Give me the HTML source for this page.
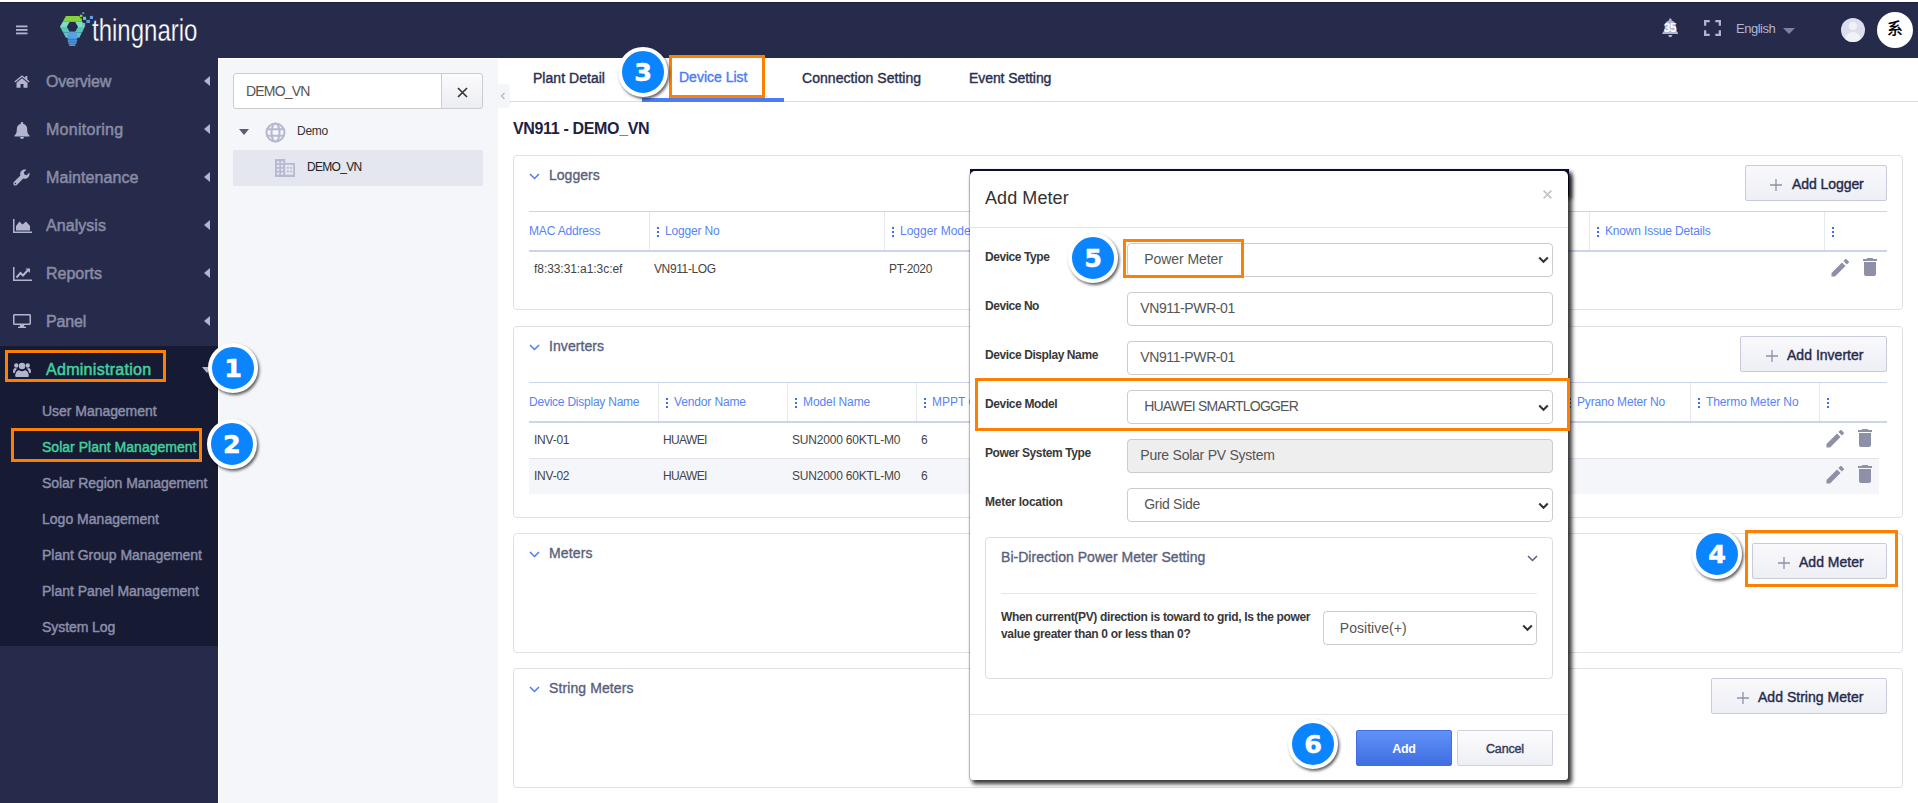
<!DOCTYPE html>
<html lang="en">
<head>
<meta charset="utf-8">
<title>Thingnario - Solar Plant Management</title>
<style>
*{box-sizing:border-box;margin:0;padding:0}
html,body{width:1918px;height:803px;overflow:hidden;background:#fff}
body{font-family:"Liberation Sans","Noto Sans CJK TC",sans-serif;font-size:14px;color:#262b4b;position:relative}
.abs,.abs-all *{position:absolute}
.t{position:absolute;white-space:nowrap;line-height:20px;height:20px}
/* ---------- header ---------- */
#topline{position:absolute;left:0;top:0;width:1918px;height:2px;background:#fff}
#header{position:absolute;left:0;top:2px;width:1918px;height:56px;background:#262b4b;border-top:1px solid #1b1f40}
#sidebar{position:absolute;left:0;top:58px;width:218px;height:745px;background:#262b4b}
#adminbg{position:absolute;left:0;top:288px;width:218px;height:300px;background:#161a33}
.mi{-webkit-text-stroke:.5px currentColor;position:absolute;left:46px;font-size:16px;font-weight:normal;color:#898ca6;line-height:20px;height:20px;white-space:nowrap}
.mi.on{color:#42d29d}
.si{-webkit-text-stroke:.45px currentColor;position:absolute;left:42px;font-size:14px;font-weight:normal;color:#8b8fa9;line-height:20px;height:20px;white-space:nowrap}
.si.on{color:#42d29d}
.arr{position:absolute;left:204px;width:0;height:0;border-top:5px solid transparent;border-bottom:5px solid transparent;border-right:6px solid #b3b5cf}
.ico{position:absolute}
#brand{position:absolute;left:92px;top:9px;font-size:30.500px;line-height:36px;color:#fff;white-space:nowrap;transform-origin:0 0;transform:scaleX(.787);letter-spacing:0;-webkit-text-stroke:.3px #262b4b}
/* ---------- tree ---------- */
#tree{position:absolute;left:218px;top:58px;width:280px;height:745px;background:#f5f6fa;border-left:1px solid #fff;border-top:1px solid #fff}
/* ---------- main ---------- */
#main{position:absolute;left:498px;top:58px;width:1420px;height:745px;background:#fff}
.panel{position:absolute;left:513px;width:1390px;border:1px solid #dfe0e6;border-radius:4px;background:#fff}
.ph{-webkit-text-stroke:.35px currentColor;position:absolute;font-size:14px;font-weight:normal;color:#5a5f7d;line-height:20px;white-space:nowrap}
.btn{position:absolute;height:38px;border:1px solid #c9cbd8;border-radius:2px;background:linear-gradient(#f9f9fc,#eeeff5);font-size:14.5px;font-weight:bold;color:#262b4b;line-height:36px;white-space:nowrap}
.th{position:absolute;font-size:12px;color:#5784f4;line-height:16px;white-space:nowrap}
.td{position:absolute;font-size:12px;color:#444;line-height:16px;white-space:nowrap}
.hl{position:absolute;height:1px;background:#ccd4ec}
.vl{position:absolute;width:1px;background:#e6e8f0}
.dots{position:absolute;width:2.600px;height:2.600px;margin:-.3px 0 0 -.3px;background:#3d6ff0;box-shadow:0 4px 0 #3d6ff0,0 8px 0 #3d6ff0}
.tab{-webkit-text-stroke:.4px currentColor;font-size:14px;font-weight:normal;color:#2b3050}
.bt{-webkit-text-stroke:.4px currentColor;font-size:14px;font-weight:normal;color:#262b4b}
/* ---------- modal ---------- */
#modal{position:absolute;left:970px;top:170px;width:598px;height:610px}
#mbg{position:absolute;left:0;top:1px;width:597.800px;height:608.700px;background:#fff;border-radius:5px 5px 3px 3px;box-shadow:3px 3px 4px .5px rgba(0,0,0,.78),-1px 0 1px rgba(0,0,0,.22)}
.lbl{position:absolute;left:15px;font-size:12px;font-weight:bold;color:#383838;line-height:16px;white-space:nowrap}
.inp{position:absolute;left:157px;width:426px;height:34px;border:1px solid #ccc;border-radius:4px;background:#fff;font-size:14px;color:#555;line-height:32px;padding-left:13px;white-space:nowrap}
.sel{padding-left:17px}
.chev{position:absolute;right:4px;top:12px;width:10px;height:8px}
.iv{font-size:14px;color:#555}
#mshadow{position:absolute;left:970px;top:169px;width:598.750px;height:27px;background:#0b1035;box-shadow:3px 3px 4px rgba(0,0,0,.6)}
/* ---------- annotations ---------- */
.badge{position:absolute;width:50px;height:50px;border-radius:50%;background:#0a84ff;border:4.750px solid #fff;box-shadow:1.500px 2px 3px rgba(0,0,0,.62);color:#fff;font-family:"DejaVu Sans","Liberation Sans",sans-serif;font-weight:bold;font-size:25.500px;line-height:42.500px;text-align:center;-webkit-text-stroke:.5px #fff}
.obox{position:absolute;border:3px solid #ff8000}
</style>
</head>
<body>
<div id="main"></div>
<div id="content">
<div style="position:absolute;left:498px;top:84px;width:12px;height:23.500px;background:#f5f6fa;border-radius:0 3px 3px 0"></div>
<svg class="ico" style="left:500px;top:92px" width="6" height="8" viewBox="0 0 6 8"><path d="M4.500 1L1.500 4l3 3" fill="none" stroke="#b0b3c8" stroke-width="1.200"/></svg>
<div class="hl" style="left:509px;top:101px;width:1409px;background:#dcdde3"></div>
<div style="position:absolute;left:642px;top:98px;width:142px;height:3.500px;background:#4b7cf3"></div>
<div class="t tab" style="left:533px;top:68px;letter-spacing:0.034px" id="tab1">Plant Detail</div>
<div class="t tab" style="left:679px;top:67px;color:#4b7cf3;letter-spacing:-0.006px" id="tab2">Device List</div>
<div class="t tab" style="left:802px;top:68px;letter-spacing:0.049px" id="tab3">Connection Setting</div>
<div class="t tab" style="left:969px;top:68px;letter-spacing:-0.075px" id="tab4">Event Setting</div>
<div class="t" style="left:513px;top:118.600px;font-size:16px;font-weight:bold;color:#1d2245;letter-spacing:-0.339px" id="title">VN911 - DEMO_VN</div>
<div class="panel" style="top:155px;height:155px"></div>
<svg class="ico" style="left:529px;top:172.5px" width="11" height="7" viewBox="0 0 11 7"><path d="M1 1l4.500 4.500L10 1" fill="none" stroke="#4b7cf3" stroke-width="1.500"/></svg>
<div class="ph" style="left:549px;top:165px;letter-spacing:0.015px" id="ph1">Loggers</div>
<div class="btn" style="left:1745px;top:165px;width:142px;height:36px"></div><svg class="ico" style="left:1770px;top:178.5px" width="12" height="12" viewBox="0 0 12 12"><path d="M6 0v12M0 6h12" stroke="#8f92a6" stroke-width="1.300"/></svg><div class="t bt" style="left:1792px;top:174.0px;letter-spacing:-0.071px" id="b1">Add Logger</div>
<div class="hl" style="left:529px;top:211px;width:1358px"></div><div class="hl" style="left:529px;top:250px;width:1358px;height:2px"></div>
<i class="vl" style="left:649px;top:212px;height:38px"></i><i class="vl" style="left:884px;top:212px;height:38px"></i><i class="vl" style="left:1589px;top:212px;height:38px"></i><i class="vl" style="left:1824px;top:212px;height:38px"></i>
<div class="th" style="left:529px;top:223px;letter-spacing:-0.178px" id="h1">MAC Address</div><i class="dots" style="left:657px;top:227px"></i><div class="th" style="left:665px;top:223px;letter-spacing:-0.161px" id="h2">Logger No</div><i class="dots" style="left:892px;top:227px"></i><div class="th" style="left:900px;top:223px" id="h3">Logger Model</div><i class="dots" style="left:1597px;top:227px"></i><div class="th" style="left:1605px;top:223px;letter-spacing:-0.170px" id="h4">Known Issue Details</div><i class="dots" style="left:1832px;top:227px"></i>
<div class="td" style="left:534px;top:261px;letter-spacing:-0.065px" id="d1">f8:33:31:a1:3c:ef</div><div class="td" style="left:654px;top:261px;letter-spacing:-0.382px" id="d2">VN911-LOG</div><div class="td" style="left:889px;top:261px;letter-spacing:-0.339px" id="d3">PT-2020</div>
<svg class="ico" style="left:1831px;top:257.5px" width="19" height="19" viewBox="0 0 19 19"><path d="M0.500 15v3.500h3.500L14.500 8 11 4.500zM17.700 4.800c0.400-0.400 0.400-1 0-1.400L15.600 1.300c-0.400-0.400-1-0.400-1.400 0L12.400 3.100l3.500 3.500z" fill="#8d90a6"/></svg><svg class="ico" style="left:1863px;top:258px" width="14" height="18" viewBox="0 0 14 18"><path d="M1 16c0 1.100 0.900 2 2 2h8c1.100 0 2-0.900 2-2V4H1zM14 1h-3.500l-1-1h-5l-1 1H0v2h14z" fill="#8d90a6"/></svg>
<div class="panel" style="top:326px;height:192px"></div>
<svg class="ico" style="left:529px;top:343.5px" width="11" height="7" viewBox="0 0 11 7"><path d="M1 1l4.500 4.500L10 1" fill="none" stroke="#4b7cf3" stroke-width="1.500"/></svg>
<div class="ph" style="left:549px;top:336px;letter-spacing:0.070px" id="ph2">Inverters</div>
<div class="btn" style="left:1740px;top:336px;width:147px;height:36px"></div><svg class="ico" style="left:1766px;top:349.5px" width="12" height="12" viewBox="0 0 12 12"><path d="M6 0v12M0 6h12" stroke="#8f92a6" stroke-width="1.300"/></svg><div class="t bt" style="left:1787px;top:345.0px;letter-spacing:0.020px" id="b2">Add Inverter</div>
<div class="hl" style="left:529px;top:382px;width:1358px"></div><div class="hl" style="left:529px;top:421px;width:1358px;height:2px"></div>
<i class="vl" style="left:658px;top:383px;height:38px"></i><i class="vl" style="left:787px;top:383px;height:38px"></i><i class="vl" style="left:916px;top:383px;height:38px"></i><i class="vl" style="left:1690px;top:383px;height:38px"></i><i class="vl" style="left:1819px;top:383px;height:38px"></i>
<div class="th" style="left:529px;top:394px;letter-spacing:-0.232px" id="h5">Device Display Name</div><i class="dots" style="left:666px;top:398px"></i><div class="th" style="left:674px;top:394px;letter-spacing:-0.136px" id="h6">Vendor Name</div><i class="dots" style="left:795px;top:398px"></i><div class="th" style="left:803px;top:394px;letter-spacing:-0.083px" id="h7">Model Name</div><i class="dots" style="left:924px;top:398px"></i><div class="th" style="left:932px;top:394px" id="h8">MPPT Count</div><i class="dots" style="left:1569px;top:398px"></i><div class="th" style="left:1577px;top:394px;letter-spacing:-0.180px" id="h9">Pyrano Meter No</div><i class="dots" style="left:1698px;top:398px"></i><div class="th" style="left:1706px;top:394px;letter-spacing:-0.102px" id="h10">Thermo Meter No</div><i class="dots" style="left:1827px;top:398px"></i>
<div style="position:absolute;left:529px;top:458px;width:1350px;height:36px;background:#f5f6fa;border-top:1px solid #e3e4ea"></div>
<div class="td" style="left:534px;top:432px;letter-spacing:-0.231px" id="r0a">INV-01</div><div class="td" style="left:663px;top:432px;letter-spacing:-0.644px" id="r0b">HUAWEI</div><div class="td" style="left:792px;top:432px;letter-spacing:-0.193px" id="r0c">SUN2000 60KTL-M0</div><div class="td" style="left:921px;top:432px">6</div>
<svg class="ico" style="left:1826px;top:428.5px" width="19" height="19" viewBox="0 0 19 19"><path d="M0.500 15v3.500h3.500L14.500 8 11 4.500zM17.700 4.800c0.400-0.400 0.400-1 0-1.400L15.600 1.300c-0.400-0.400-1-0.400-1.400 0L12.400 3.100l3.500 3.500z" fill="#8d90a6"/></svg><svg class="ico" style="left:1858px;top:429px" width="14" height="18" viewBox="0 0 14 18"><path d="M1 16c0 1.100 0.900 2 2 2h8c1.100 0 2-0.900 2-2V4H1zM14 1h-3.500l-1-1h-5l-1 1H0v2h14z" fill="#8d90a6"/></svg>
<div class="td" style="left:534px;top:468px;letter-spacing:-0.231px" id="r1a">INV-02</div><div class="td" style="left:663px;top:468px;letter-spacing:-0.644px" id="r1b">HUAWEI</div><div class="td" style="left:792px;top:468px;letter-spacing:-0.193px" id="r1c">SUN2000 60KTL-M0</div><div class="td" style="left:921px;top:468px">6</div>
<svg class="ico" style="left:1826px;top:464.5px" width="19" height="19" viewBox="0 0 19 19"><path d="M0.500 15v3.500h3.500L14.500 8 11 4.500zM17.700 4.800c0.400-0.400 0.400-1 0-1.400L15.600 1.300c-0.400-0.400-1-0.400-1.400 0L12.400 3.100l3.500 3.500z" fill="#8d90a6"/></svg><svg class="ico" style="left:1858px;top:465px" width="14" height="18" viewBox="0 0 14 18"><path d="M1 16c0 1.100 0.900 2 2 2h8c1.100 0 2-0.900 2-2V4H1zM14 1h-3.500l-1-1h-5l-1 1H0v2h14z" fill="#8d90a6"/></svg>
<div class="panel" style="top:533px;height:120px"></div>
<svg class="ico" style="left:529px;top:550.5px" width="11" height="7" viewBox="0 0 11 7"><path d="M1 1l4.500 4.500L10 1" fill="none" stroke="#4b7cf3" stroke-width="1.500"/></svg>
<div class="ph" style="left:549px;top:543px;letter-spacing:0.151px" id="ph3">Meters</div>
<div class="btn" style="left:1752px;top:543px;width:135px;height:36px"></div><svg class="ico" style="left:1778px;top:556.5px" width="12" height="12" viewBox="0 0 12 12"><path d="M6 0v12M0 6h12" stroke="#8f92a6" stroke-width="1.300"/></svg><div class="t bt" style="left:1799px;top:552.0px;letter-spacing:0.001px" id="b3">Add Meter</div>
<div class="panel" style="top:668px;height:120px"></div>
<svg class="ico" style="left:529px;top:685.5px" width="11" height="7" viewBox="0 0 11 7"><path d="M1 1l4.500 4.500L10 1" fill="none" stroke="#4b7cf3" stroke-width="1.500"/></svg>
<div class="ph" style="left:549px;top:678px;letter-spacing:0.104px" id="ph4">String Meters</div>
<div class="btn" style="left:1711px;top:678px;width:176px;height:36px"></div><svg class="ico" style="left:1737px;top:691.5px" width="12" height="12" viewBox="0 0 12 12"><path d="M6 0v12M0 6h12" stroke="#8f92a6" stroke-width="1.300"/></svg><div class="t bt" style="left:1758px;top:687.0px;letter-spacing:0.021px" id="b4">Add String Meter</div>
</div>
<div id="tree">
<div style="position:absolute;left:14px;top:14px;width:209px;height:36px;border:1px solid #ccc;border-radius:3px 0 0 3px;background:#fff"></div>
<div class="t" style="left:27px;top:21.500px;font-size:14px;color:#555;letter-spacing:-0.819px" id="srch">DEMO_VN</div>
<div style="position:absolute;left:222px;top:14px;width:42px;height:36px;border:1px solid #ccc;border-radius:0 3px 3px 0;background:linear-gradient(#fbfbfd,#ecedf3)"></div>
<svg class="ico" style="left:237.500px;top:28px" width="11" height="11" viewBox="0 0 11 11"><path d="M1 1l9 9M10 1l-9 9" stroke="#333" stroke-width="1.600" fill="none"/></svg>
<div class="ico" style="left:20px;top:70px;width:0;height:0;border-left:5.500px solid transparent;border-right:5.500px solid transparent;border-top:6px solid #5a5d78"></div>
<svg class="ico" style="left:45.500px;top:62.500px" width="21" height="21" viewBox="0 0 21 21"><g fill="none" stroke="#b7b9d0" stroke-width="2.100"><circle cx="10.500" cy="10.500" r="9"/><ellipse cx="10.500" cy="10.500" rx="4" ry="9"/><path d="M1.500 7.300h18M1.500 13.700h18"/></g></svg>
<div class="t" style="left:78px;top:62px;font-size:12px;color:#333;letter-spacing:-0.279px" id="demo">Demo</div>
<div style="position:absolute;left:14px;top:91px;width:250px;height:36px;background:#e4e6f0"></div>
<svg class="ico" style="left:56px;top:100px" width="20" height="18" viewBox="0 0 20 18"><path fill-rule="evenodd" d="M0 0h10.200v4H20v17.500H0zM2 2.300v2h2.300v-2zM6 2.300v2h2.300v-2zM2 6v2h2.300V6zM6 6v2h2.300V6zM2 9.700v2h2.300v-2zM6 9.700v2h2.300v-2zM2 13.400v2.400h2.300v-2.400zM6 13.400v2.400h2.300v-2.400zM10.200 5.800v10h8V5.800zM12 8h1.800v1.800H12zM15 8h1.800v1.800H15zM12 11.500h1.800v1.800H12zM15 11.500h1.800v1.800H15z" fill="#b7b9d0"/></svg>
<div class="t" style="left:88px;top:98px;font-size:12px;color:#222;letter-spacing:-0.706px" id="demovn">DEMO_VN</div>
</div>
<div id="mshadow"></div>
<div id="modal">
<div id="mbg"></div>
<div class="t" style="left:15px;top:16.7px;font-size:18px;line-height:22px;height:22px;color:#333;letter-spacing:0.073px" id="mt">Add Meter</div>
<svg class="ico" style="left:572.800px;top:20.400px" width="9" height="9" viewBox="0 0 9 9"><path d="M0.600 0.600l7.800 7.800M8.400 0.600L0.600 8.400" stroke="#c6c6c6" stroke-width="1.800" fill="none"/></svg>
<div class="hl" style="left:0;top:57px;width:598px;background:#e5e5e5"></div>
<div class="lbl" style="top:78.5px;letter-spacing:-0.432px" id="l1">Device Type</div><div class="inp" style="top:73px"></div><div class="t iv" style="left:174.2px;top:79.1px;letter-spacing:-0.060px" id="v1">Power Meter</div><svg class="ico" style="left:567.5px;top:86.4px" width="11" height="8" viewBox="0 0 11 8"><path d="M1.200 1.500l4.300 4.300 4.300-4.300" fill="none" stroke="#333" stroke-width="2"/></svg>
<div class="lbl" style="top:127.7px;letter-spacing:-0.448px" id="l2">Device No</div><div class="inp" style="top:122px"></div><div class="t iv" style="left:170.3px;top:128.2px;letter-spacing:-0.394px" id="v2">VN911-PWR-01</div>
<div class="lbl" style="top:176.6px;letter-spacing:-0.412px" id="l3">Device Display Name</div><div class="inp" style="top:171px"></div><div class="t iv" style="left:170.3px;top:177.1px;letter-spacing:-0.394px" id="v3">VN911-PWR-01</div>
<div class="lbl" style="top:225.6px;letter-spacing:-0.375px" id="l4">Device Model</div><div class="inp" style="top:220px"></div><div class="t iv" style="left:174.2px;top:226.3px;letter-spacing:-0.791px" id="v4">HUAWEI SMARTLOGGER</div><svg class="ico" style="left:567.5px;top:233.6px" width="11" height="8" viewBox="0 0 11 8"><path d="M1.200 1.500l4.300 4.300 4.300-4.300" fill="none" stroke="#333" stroke-width="2"/></svg>
<div class="lbl" style="top:274.8px;letter-spacing:-0.394px" id="l5">Power System Type</div><div class="inp" style="top:269px;background:#eee"></div><div class="t iv" style="left:170.3px;top:275.2px;letter-spacing:-0.244px" id="v5">Pure Solar PV System</div>
<div class="lbl" style="top:323.7px;letter-spacing:-0.261px" id="l6">Meter location</div><div class="inp" style="top:318px"></div><div class="t iv" style="left:174.2px;top:324.3px;letter-spacing:-0.284px" id="v6">Grid Side</div><svg class="ico" style="left:567.5px;top:331.6px" width="11" height="8" viewBox="0 0 11 8"><path d="M1.200 1.500l4.300 4.300 4.300-4.300" fill="none" stroke="#333" stroke-width="2"/></svg>
<div style="position:absolute;left:15px;top:367px;width:568px;height:141.500px;border:1px solid #ddd;border-radius:4px"></div>
<div class="ph" style="left:31px;top:377px;letter-spacing:0.038px" id="bi">Bi-Direction Power Meter Setting</div>
<svg class="ico" style="left:557px;top:385px" width="11" height="7" viewBox="0 0 11 7"><path d="M1 1l4.500 4.500L10 1" fill="none" stroke="#5a5f7d" stroke-width="1.500"/></svg>
<div class="hl" style="left:31px;top:423px;width:536px;background:#e5e5e5"></div>
<div class="lbl" style="left:31px;top:438.7px;letter-spacing:-0.336px" id="q1">When current(PV) direction is toward to grid, Is the power</div>
<div class="lbl" style="left:31px;top:456px;letter-spacing:-0.334px" id="q2">value greater than 0 or less than 0?</div>
<div class="inp" style="left:353.3px;top:441px;width:214px"></div><div class="t iv" style="left:369.8px;top:447.9px;letter-spacing:0.034px" id="v7">Positive(+)</div><svg class="ico" style="left:551.5px;top:454.2px" width="11" height="8" viewBox="0 0 11 8"><path d="M1.200 1.500l4.300 4.300 4.300-4.300" fill="none" stroke="#333" stroke-width="2"/></svg>
<div class="hl" style="left:0;top:544px;width:598px;background:#e5e5e5"></div>
<div style="position:absolute;left:386px;top:560px;width:96px;height:36px;border-radius:2px;background:linear-gradient(#6092f8,#3f6de2);border:1px solid #3f6de2"></div><div class="t" style="left:386px;top:568.500px;width:96px;text-align:center;color:#fff;font-size:12.500px;font-weight:bold;letter-spacing:-.3px">Add</div>
<div style="position:absolute;left:487px;top:560px;width:96px;height:36px;border-radius:2px;background:linear-gradient(#fcfcfe,#eeeff5);border:1px solid #cfd1dc"></div><div class="t" style="left:487px;top:568.500px;width:96px;text-align:center;color:#353a58;font-size:12.500px;-webkit-text-stroke:.4px #353a58;letter-spacing:-.15px" id="cancel">Cancel</div>
</div>
<div id="sidebar"><div id="adminbg"></div>
<svg class="ico" style="left:14px;top:17.0px" width="16" height="13" viewBox="0 0 16 13"><path d="M8 0.3L0.3 6.6l0.9 1 6.8-5.6 6.8 5.6 0.9-1-2.4-2V1h-2v1.9zM2.5 7.8V12.7h4V9h3v3.7h4V7.8L8 3.3z" fill="#b3b5cf"/></svg>
<div id="s1" class="mi" style="top:13.5px;letter-spacing:-0.211px">Overview</div><div class="arr" style="top:18px"></div>
<svg class="ico" style="left:14px;top:63.5px" width="16" height="17" viewBox="0 0 16 17"><path d="M8 0c0.7 0 1.2 0.5 1.2 1.2v0.5c2.6 0.6 4 2.8 4 5.5 0 4 1 5 2.3 6.2v1H0.5v-1C1.800 12.2 2.800 11.200 2.800 7.200c0-2.700 1.400-4.900 4-5.500V1.200C6.800 0.500 7.300 0 8 0zM6 15h4c0 1.100-0.900 2-2 2s-2-0.900-2-2z" fill="#b3b5cf"/></svg>
<div id="s2" class="mi" style="top:61.5px;letter-spacing:0.270px">Monitoring</div><div class="arr" style="top:66px"></div>
<svg class="ico" style="left:13px;top:110.5px" width="17" height="17" viewBox="0 0 17 17"><path d="M16.300 3.600l-2.600 2.600-2.300-0.600-0.600-2.300 2.600-2.600c-1.700-0.600-3.600-0.200-4.900 1.100-1.300 1.300-1.700 3.200-1.100 4.800L0.900 13.100c-0.800 0.800-0.800 2.100 0 2.900 0.800 0.800 2.100 0.800 2.900 0l6.500-6.500c1.600 0.600 3.500 0.200 4.800-1.100 1.400-1.300 1.800-3.200 1.200-4.800zM2.400 15.300c-0.400 0-0.800-0.400-0.800-0.800s0.400-0.800 0.800-0.800 0.800 0.400 0.800 0.800-0.400 0.800-0.800 0.800z" fill="#b3b5cf"/></svg>
<div id="s3" class="mi" style="top:109.5px;letter-spacing:0.089px">Maintenance</div><div class="arr" style="top:114px"></div>
<svg class="ico" style="left:13px;top:160.5px" width="19" height="14" viewBox="0 0 19 14"><path d="M0 0h1.500v12.500H19V14H0zM3 11.500V7l3.500-4.500 3 3 3.500-3L17 7v4.500z" fill="#b3b5cf"/></svg>
<div id="s4" class="mi" style="top:157.5px;letter-spacing:0.053px">Analysis</div><div class="arr" style="top:162px"></div>
<svg class="ico" style="left:13px;top:208.5px" width="19" height="14" viewBox="0 0 19 14"><path d="M0 0h1.500v12.500H19V14H0z" fill="#b3b5cf"/><path d="M3.500 10.500l4-4.500 2.500 2.500 5-5.500" fill="none" stroke="#b3b5cf" stroke-width="2"/><path d="M12.500 1.500h4.500v4.500z" fill="#b3b5cf"/></svg>
<div id="s5" class="mi" style="top:205.5px;letter-spacing:-0.019px">Reports</div><div class="arr" style="top:210px"></div>
<svg class="ico" style="left:13px;top:256px" width="18" height="14" viewBox="0 0 18 14"><path d="M1.500 0h15c0.800 0 1.500 0.700 1.500 1.500v8c0 0.800-0.700 1.500-1.500 1.500h-5.500l0.400 1.800h1.600v1.200H5V12.800h1.600L7 11H1.500C0.700 11 0 10.300 0 9.500v-8C0 0.700 0.700 0 1.500 0zM1.500 1.500v8h15v-8z" fill="#b3b5cf"/></svg>
<div id="s6" class="mi" style="top:253.5px;letter-spacing:-0.184px">Panel</div><div class="arr" style="top:258px"></div>
<svg class="ico" style="left:13px;top:303.5px" width="18" height="15" viewBox="0 0 18 15"><circle cx="9" cy="4" r="3.200" fill="#b3b5cf"/><path d="M3.500 15c-0.800 0-1.300-0.600-1.300-1.300 0-3 1.800-5.500 4-5.500 0.800 0.700 1.700 1.100 2.800 1.100s2-0.400 2.800-1.100c2.200 0 4 2.500 4 5.500 0 0.700-0.500 1.300-1.300 1.300z" fill="#b3b5cf"/><circle cx="3.300" cy="3.500" r="2.200" fill="#b3b5cf"/><circle cx="14.700" cy="3.500" r="2.200" fill="#b3b5cf"/><path d="M0 9.500c0-2 1-3.500 2.500-3.500 0.600 0.500 1.200 0.700 2 0.600-1.500 1-2.400 2.600-2.600 4.400H1.200C0.500 11 0 10.500 0 9.500zM18 9.500c0-2-1-3.500-2.500-3.500-0.600 0.500-1.200 0.700-2 0.600 1.500 1 2.400 2.600 2.600 4.400h0.700c0.700 0 1.200-0.500 1.200-1.500z" fill="#b3b5cf"/></svg>
<div id="s7" class="mi on" style="top:301.5px;letter-spacing:0.288px">Administration</div>
<div class="ico" style="left:202px;top:309px;width:0;height:0;border-left:5px solid transparent;border-right:5px solid transparent;border-top:6px solid #b3b5cf"></div>
<div id="s8" class="si" style="top:343px;letter-spacing:-0.038px">User Management</div>
<div id="s9" class="si on" style="top:379px;letter-spacing:0.018px">Solar Plant Management</div>
<div id="s10" class="si" style="top:415px;letter-spacing:-0.054px">Solar Region Management</div>
<div id="s11" class="si" style="top:451px;letter-spacing:0.016px">Logo Management</div>
<div id="s12" class="si" style="top:487px;letter-spacing:-0.015px">Plant Group Management</div>
<div id="s13" class="si" style="top:523px;letter-spacing:-0.010px">Plant Panel Management</div>
<div id="s14" class="si" style="top:559px;letter-spacing:-0.064px">System Log</div>
</div>
<div id="header">
<svg class="ico" style="left:16px;top:22px" width="12" height="10" viewBox="0 0 12 10"><rect x="0" y="0.5" width="11.5" height="1.8" fill="#b3b5cf"/><rect x="0" y="4" width="11.5" height="1.8" fill="#b3b5cf"/><rect x="0" y="7.5" width="11.5" height="1.8" fill="#b3b5cf"/></svg>
<svg class="ico" style="left:58px;top:7px" width="38" height="38" viewBox="58 10 38 38">
<defs><clipPath id="hx"><polygon points="60,26.800 65.900,15.900 79.300,15.900 84.900,26.800 79.300,37.700 65.900,37.700"/></clipPath></defs>
<g clip-path="url(#hx)"><rect x="58" y="15" width="30" height="6.800" fill="#86d13c"/><rect x="58" y="21.800" width="30" height="5.200" fill="#7fdac6"/><rect x="58" y="27" width="30" height="5.500" fill="#55c8b4"/><rect x="58" y="32.500" width="30" height="6" fill="#58c4cf"/><polygon points="68,38 72.400,31 76.800,38" fill="#4f9be0"/></g>
<polygon points="66.800,26.800 69.600,21.900 75.200,21.900 78,26.800 75.200,31.700 69.600,31.700" fill="#262b4b"/>
<polygon points="69.600,31.700 75.200,31.700 77.500,35.500 76.500,37.700 68.300,37.700 67.300,35.500" fill="#5a9fe2"/>
<rect x="67.700" y="38" width="9.400" height="1.700" fill="#4f9be0"/><rect x="67.700" y="40.100" width="9.400" height="1.700" fill="#4f9be0"/><rect x="68.300" y="42.200" width="8.200" height="1.700" fill="#4f9be0"/><rect x="69.200" y="44.200" width="6.200" height="1.800" fill="#4f9be0"/>
<rect x="79.900" y="14.700" width="2.500" height="2.400" fill="#86d13c"/><rect x="78" y="18.400" width="3.800" height="2.600" fill="#86d13c"/><rect x="83" y="16.800" width="3.100" height="3.100" fill="#62cdb4"/><rect x="86.400" y="19.900" width="3.500" height="3.100" fill="#5aa2e4"/><rect x="89.900" y="15.900" width="3.100" height="3.100" fill="#5aa2e4"/><rect x="82" y="23" width="3.200" height="2.900" fill="#62cdb4"/><rect x="82.400" y="12.200" width="1.800" height="1.800" fill="#5aa2e4"/>
</svg>
<div id="brand">thingnario</div>
<svg class="ico" style="left:1661.800px;top:14.800px" width="16.600" height="20.600" viewBox="0 0 18 22"><path d="M9 0.5c0.8 0 1.4 0.6 1.4 1.4v0.6c3 0.7 4.6 3.2 4.6 6.3 0 4.6 1.2 5.8 2.6 7.2v1.2H0.4V16c1.4-1.4 2.6-2.6 2.6-7.2 0-3.1 1.6-5.6 4.6-6.3V1.9C7.6 1.1 8.2 0.5 9 0.5zM6.8 18.4h4.4c0 1.3-1 2.3-2.2 2.3s-2.2-1-2.2-2.3z" fill="#b3b5cf"/></svg>
<div class="t" style="left:1661px;top:15px;width:18px;text-align:center;color:#fff;font-size:12px;font-weight:bold;letter-spacing:-0.3px">35</div>
<svg class="ico" style="left:1703.600px;top:16.500px" width="17" height="16" viewBox="0 0 18 17"><path d="M1.200 6V1.200h4.800M12 1.200h4.800v4.800M16.800 11v4.800h-4.800M6 15.800H1.200v-4.800" fill="none" stroke="#b3b5cf" stroke-width="2.400"/></svg>
<div class="t" style="left:1736px;top:16px;color:#b3b5cf;font-size:13px;letter-spacing:-0.5px">English</div>
<div class="ico" style="left:1783px;top:25px;width:0;height:0;border-left:6px solid transparent;border-right:6px solid transparent;border-top:6px solid #7d819f"></div>
<div class="ico" style="left:1840.800px;top:14.700px;width:24.400px;height:24.400px;border-radius:50%;background:#dcdded;overflow:hidden"><div style="position:absolute;left:8.200px;top:4.500px;width:8px;height:8px;border-radius:50%;background:#f1f1f8"></div><div style="position:absolute;left:4.200px;top:14px;width:16px;height:12px;border-radius:8px 8px 0 0;background:#f1f1f8"></div></div>
<div class="ico" style="left:1877px;top:9px;width:36px;height:36px;border-radius:50%;background:#fff;color:#000;font-size:16px;line-height:33px;text-align:center;font-family:'Liberation Sans','Noto Sans CJK TC',sans-serif;font-weight:500">系</div>
</div>
<div id="topline"></div>
<div class="obox" style="left:5px;top:350px;width:161.3px;height:32px"></div>
<div class="obox" style="left:11px;top:428px;width:191.2px;height:34px"></div>
<div class="obox" style="left:669px;top:55px;width:96px;height:43px"></div>
<div class="obox" style="left:1745px;top:530px;width:153px;height:57px"></div>
<div class="obox" style="left:1123px;top:239px;width:121px;height:38.7px"></div>
<div class="obox" style="left:975px;top:378px;width:595px;height:53px"></div>
<div class="badge" style="left:208.1px;top:342.8px">1</div>
<div class="badge" style="left:206.8px;top:418.5px">2</div>
<div class="badge" style="left:618.0px;top:46.8px">3</div>
<div class="badge" style="left:1692.0px;top:528.7px">4</div>
<div class="badge" style="left:1068.1px;top:232.9px">5</div>
<div class="badge" style="left:1288.1px;top:718.8px">6</div>

</body>
</html>
